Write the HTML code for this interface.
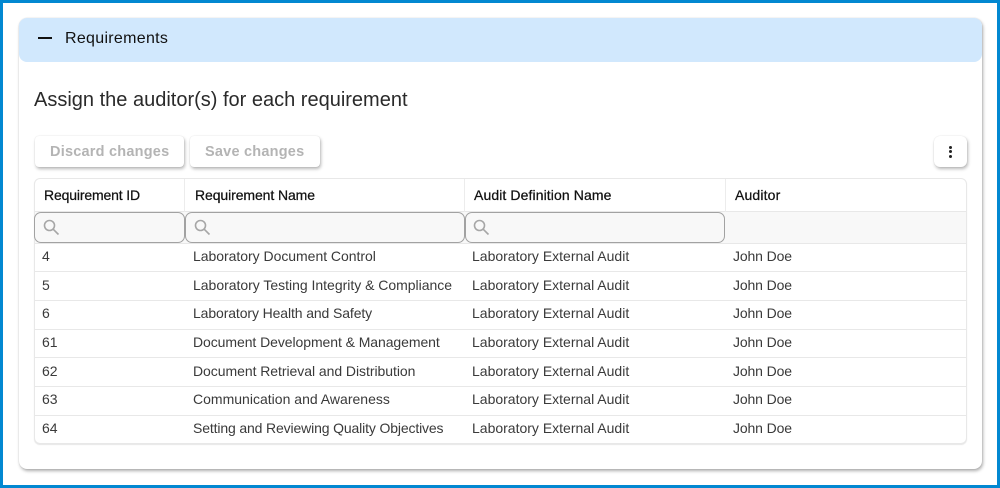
<!DOCTYPE html>
<html><head><meta charset="utf-8"><style>
html,body{margin:0;padding:0}
body{width:1000px;height:488px;position:relative;overflow:hidden;background:#fff;font-family:"Liberation Sans",sans-serif}
#f{position:absolute;left:0;top:0;width:994px;height:482px;border:3px solid #0288d1;pointer-events:none;z-index:9}
.a{position:absolute}
.t{position:absolute;white-space:nowrap;line-height:20px;height:20px}
.c{font-size:14px;color:#3a3a3a;letter-spacing:0}
.j{letter-spacing:-.13px}
.h{font-size:14px;color:#111;-webkit-text-stroke:.25px #111;top:185px}
.b{position:absolute;top:136px;height:31px;background:#fff;border-radius:4px;box-shadow:1px 2px 3px rgba(0,0,0,.28),0 0 1px rgba(0,0,0,.15)}
.bt{font-size:14.5px;font-weight:bold;color:#b4b4b4;top:142px;letter-spacing:.22px}
.r{position:absolute;left:35px;width:931px;height:1px;background:#e8e8e8}
.v{position:absolute;top:179px;width:1px;height:33px;background:#ececec}
.i{position:absolute;top:212px;height:29px;background:#f8f8f8;border:1px solid #a2a2a2;border-radius:7px}
.s{position:absolute;top:219px}
</style></head><body>
<div id="f"></div>
<div class="a" style="left:19px;top:18px;width:963px;height:451px;background:#fff;border-radius:8px;box-shadow:1px 2px 3px rgba(0,0,0,.32),0 0 1px rgba(0,0,0,.18)"></div>
<div class="a" style="left:19px;top:18px;width:963px;height:44px;background:#d1e8fd;border-radius:8px"></div>
<div class="a" style="left:38px;top:37px;width:14px;height:2px;background:#111"></div>
<div class="t" style="left:65px;top:29px;font-size:16px;color:#111;letter-spacing:.3px">Requirements</div>
<div class="t" style="left:34px;top:89px;height:22px;line-height:22px;font-size:20px;color:#2a2a2a;letter-spacing:0">Assign the auditor(s) for each requirement</div>

<div class="b" style="left:35px;width:149px"></div>
<div class="t bt" style="left:50px">Discard changes</div>
<div class="b" style="left:190px;width:130px"></div>
<div class="t bt" style="left:205px">Save changes</div>
<div class="b" style="left:934px;width:33px;border-radius:6px"></div>
<div class="a" style="left:949px;top:146px;width:3px;height:3px;border-radius:50%;background:#222"></div>
<div class="a" style="left:949px;top:150px;width:3px;height:3px;border-radius:50%;background:#222"></div>
<div class="a" style="left:949px;top:155px;width:3px;height:3px;border-radius:50%;background:#222"></div>

<div class="a" style="left:34px;top:178px;width:931px;height:264px;background:#fff;border:1px solid #e8e8e8;border-radius:6px;box-shadow:0 1px 1px rgba(0,0,0,.1)"></div>
<div class="a" style="left:35px;top:212px;width:931px;height:31px;background:#f8f8f8"></div>
<div class="r" style="top:211px"></div>
<div class="r" style="top:243px"></div>
<div class="r" style="top:271px"></div>
<div class="r" style="top:300px"></div>
<div class="r" style="top:329px"></div>
<div class="r" style="top:357px"></div>
<div class="r" style="top:386px"></div>
<div class="r" style="top:415px"></div>
<div class="v" style="left:184px"></div>
<div class="v" style="left:464px"></div>
<div class="v" style="left:725px"></div>

<div class="t h" style="left:44px;letter-spacing:-.15px">Requirement ID</div>
<div class="t h" style="left:195px;letter-spacing:-.09px">Requirement Name</div>
<div class="t h" style="left:474px;letter-spacing:.1px">Audit Definition Name</div>
<div class="t h" style="left:735px;letter-spacing:.15px">Auditor</div>

<div class="i" style="left:34px;width:149px"></div>
<div class="i" style="left:185px;width:278px"></div>
<div class="i" style="left:465px;width:258px"></div>
<svg class="s" style="left:43px" width="17" height="17" viewBox="0 0 17 17" fill="none" stroke="#a6a6a6" stroke-width="1.6"><circle cx="6.5" cy="6.5" r="5"/><path d="M10.3 10.3L15.5 15.5"/></svg>
<svg class="s" style="left:194px" width="17" height="17" viewBox="0 0 17 17" fill="none" stroke="#a6a6a6" stroke-width="1.6"><circle cx="6.5" cy="6.5" r="5"/><path d="M10.3 10.3L15.5 15.5"/></svg>
<svg class="s" style="left:473px" width="17" height="17" viewBox="0 0 17 17" fill="none" stroke="#a6a6a6" stroke-width="1.6"><circle cx="6.5" cy="6.5" r="5"/><path d="M10.3 10.3L15.5 15.5"/></svg>

<div class="t c" style="left:42px;top:246px">4</div><div class="t c" style="left:193px;top:246px;letter-spacing:-.03px">Laboratory Document Control</div><div class="t c" style="left:472px;top:246px">Laboratory External Audit</div><div class="t c j" style="left:733px;top:246px">John Doe</div>
<div class="t c" style="left:42px;top:275px">5</div><div class="t c" style="left:193px;top:275px;letter-spacing:-.015px">Laboratory Testing Integrity &amp; Compliance</div><div class="t c" style="left:472px;top:275px">Laboratory External Audit</div><div class="t c j" style="left:733px;top:275px">John Doe</div>
<div class="t c" style="left:42px;top:303px">6</div><div class="t c" style="left:193px;top:303px;letter-spacing:-.11px">Laboratory Health and Safety</div><div class="t c" style="left:472px;top:303px">Laboratory External Audit</div><div class="t c j" style="left:733px;top:303px">John Doe</div>
<div class="t c" style="left:42px;top:332px">61</div><div class="t c" style="left:193px;top:332px;letter-spacing:-.07px">Document Development &amp; Management</div><div class="t c" style="left:472px;top:332px">Laboratory External Audit</div><div class="t c j" style="left:733px;top:332px">John Doe</div>
<div class="t c" style="left:42px;top:361px">62</div><div class="t c" style="left:193px;top:361px;letter-spacing:-.05px">Document Retrieval and Distribution</div><div class="t c" style="left:472px;top:361px">Laboratory External Audit</div><div class="t c j" style="left:733px;top:361px">John Doe</div>
<div class="t c" style="left:42px;top:389px">63</div><div class="t c" style="left:193px;top:389px;letter-spacing:.01px">Communication and Awareness</div><div class="t c" style="left:472px;top:389px">Laboratory External Audit</div><div class="t c j" style="left:733px;top:389px">John Doe</div>
<div class="t c" style="left:42px;top:418px">64</div><div class="t c" style="left:193px;top:418px;letter-spacing:-.14px">Setting and Reviewing Quality Objectives</div><div class="t c" style="left:472px;top:418px">Laboratory External Audit</div><div class="t c j" style="left:733px;top:418px">John Doe</div>
</body></html>
